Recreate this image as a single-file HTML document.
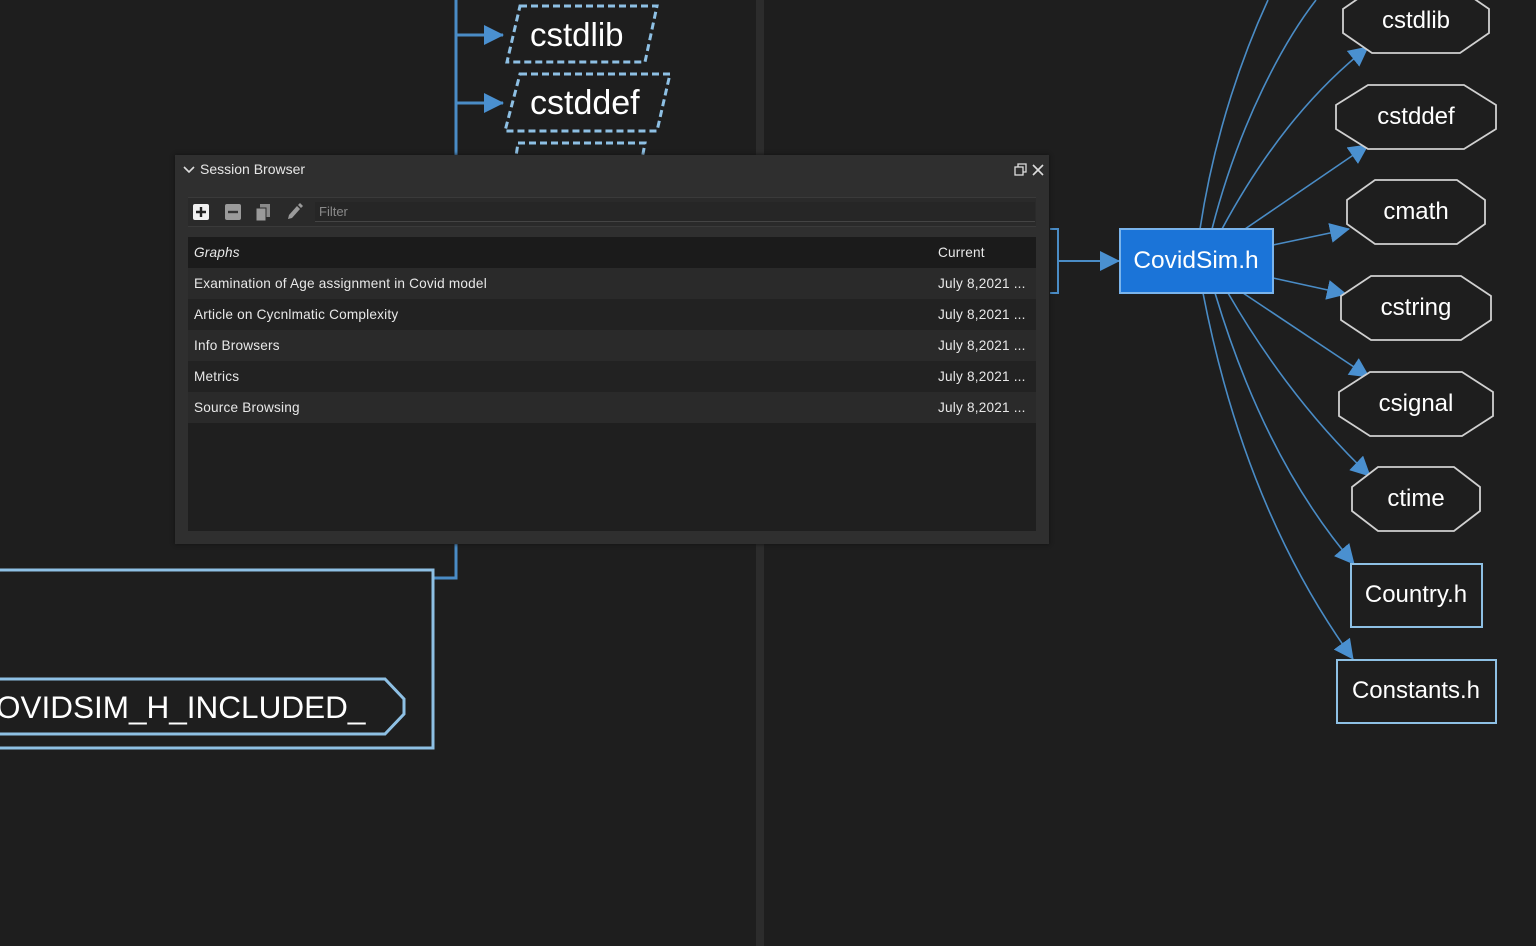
<!DOCTYPE html>
<html><head><meta charset="utf-8"><style>
html,body{margin:0;padding:0;background:#1e1e1e;width:1536px;height:946px;overflow:hidden;font-family:"Liberation Sans",sans-serif;}
svg{position:absolute;left:0;top:0;}
.panel{position:absolute;left:175px;top:155px;width:874px;height:389px;background:#2f2f2f;box-shadow:0 0 4px #111;}
.title{position:absolute;left:8px;top:6px;color:#e6e6e6;font-size:14px;}
.tb{position:absolute;left:13px;top:42px;width:848px;height:28px;background:#2a2a2a;border-top:1px solid #3a3a3a;border-bottom:1px solid #3a3a3a;}
.filter{position:absolute;left:127px;top:4px;width:720px;height:20px;background:#262626;border-bottom:1px solid #444;color:#8a8a8a;font-size:13px;line-height:20px;padding-left:4px;box-sizing:border-box;}
.table{position:absolute;left:13px;top:82px;width:848px;height:294px;background:#1f1f1f;}
.row{height:31px;line-height:32px;font-size:13.6px;letter-spacing:0.2px;color:#e8e8e8;position:relative;padding-left:6px;}
.row span{position:absolute;left:750px;}
.hd{background:#1b1b1b;}
.a{background:#2a2a2a;}
.b{background:#222;}
</style></head><body>
<svg width="1536" height="946" viewBox="0 0 1536 946">
<defs>
<marker id="ar2" markerWidth="20" markerHeight="20" refX="19" refY="10" orient="auto" markerUnits="userSpaceOnUse" viewBox="0 0 20 20"><path d="M0,0 L20,10 L0,20z" fill="#4a90d0"/></marker>
</defs>
<rect x="756" y="0" width="8" height="946" fill="#2c2c2c"/>
<g stroke="#4a8cc6" stroke-width="3" fill="none">
<path d="M456,0 L456,578 L433,578"/>
<path d="M456,35 L503,35" marker-end="url(#ar2)"/>
<path d="M456,103 L503,103" marker-end="url(#ar2)"/>
</g>
<g stroke="#8ec0e4" stroke-width="3" fill="none" stroke-dasharray="7,4">
<polygon points="520,6 657,6 645,62 507,62"/>
<polygon points="520,74 670,74 657,131 505,131"/>
<polygon points="518,143 645,143 640,170 514,170"/>
</g>
<g fill="#fff" font-family="Liberation Sans,sans-serif">
<text x="530" y="46" font-size="33">cstdlib</text>
<text x="530" y="114" font-size="34">cstddef</text>
</g>
<path d="M-10,570 L433,570 L433,748 L-10,748" stroke="#8ec0e4" stroke-width="3" fill="none"/>
<path d="M-10,679 L385,679 L404,699 L404,714 L385,734 L-10,734" stroke="#8ec0e4" stroke-width="3" fill="none"/>
<text x="-4" y="718" fill="#fff" font-size="31.5" font-family="Liberation Sans,sans-serif">OVIDSIM_H_INCLUDED_</text>
<path d="M1050,229 L1058,229 L1058,293 L1050,293" stroke="#4a8cc6" stroke-width="2" fill="none"/>
<path d="M1058,261 L1119,261" stroke="#4a8cc6" stroke-width="2" marker-end="url(#ar2)"/>
<g stroke="#4a8cc6" stroke-width="1.6" fill="none">
<path d="M1200,229 C1215,130 1245,50 1268,0"/>
<path d="M1212,229 C1240,120 1285,40 1316,0"/>
<path d="M1222,229 C1270,140 1320,85 1368,47" marker-end="url(#ar2)"/>
<path d="M1245,229 L1368,145" marker-end="url(#ar2)"/>
<path d="M1273,245 L1349,229" marker-end="url(#ar2)"/>
<path d="M1273,278 L1346,294" marker-end="url(#ar2)"/>
<path d="M1243,293 L1369,377" marker-end="url(#ar2)"/>
<path d="M1228,293 Q1290,400 1370,476" marker-end="url(#ar2)"/>
<path d="M1215,293 Q1265,460 1354,564" marker-end="url(#ar2)"/>
<path d="M1203,293 Q1245,510 1353,659" marker-end="url(#ar2)"/>
</g>
<rect x="1120" y="229" width="153" height="64" fill="#1b74d8" stroke="#7ab4ec" stroke-width="2"/>
<text x="1196" y="268" fill="#fff" font-size="24.5" text-anchor="middle" font-family="Liberation Sans,sans-serif">CovidSim.h</text>
<g stroke="#d0d0d0" stroke-width="1.8" fill="#1e1e1e">
<polygon points="1372,-11 1460,-11 1489,9 1489,33 1460,53 1372,53 1343,33 1343,9"/>
<polygon points="1368,85 1464,85 1496,105 1496,129 1464,149 1368,149 1336,129 1336,105"/>
<polygon points="1375,180 1457,180 1485,200 1485,224 1457,244 1375,244 1347,224 1347,200"/>
<polygon points="1371,276 1461,276 1491,296 1491,320 1461,340 1371,340 1341,320 1341,296"/>
<polygon points="1370,372 1462,372 1493,392 1493,416 1462,436 1370,436 1339,416 1339,392"/>
<polygon points="1378,467 1454,467 1480,487 1480,511 1454,531 1378,531 1352,511 1352,487"/>
</g>
<g stroke="#8ec0e4" stroke-width="2" fill="#1e1e1e">
<rect x="1351" y="564" width="131" height="63"/>
<rect x="1337" y="660" width="159" height="63"/>
</g>
<g fill="#fff" font-size="24" text-anchor="middle" font-family="Liberation Sans,sans-serif">
<text x="1416" y="28">cstdlib</text>
<text x="1416" y="124">cstddef</text>
<text x="1416" y="219">cmath</text>
<text x="1416" y="315">cstring</text>
<text x="1416" y="411">csignal</text>
<text x="1416" y="506">ctime</text>
<text x="1416" y="602">Country.h</text>
<text x="1416" y="698">Constants.h</text>
</g>
</svg>
<div class="panel">
<svg width="16" height="16" style="left:6px;top:7px" viewBox="0 0 16 16"><path d="M3,5 L8,10 L13,5" stroke="#ddd" stroke-width="1.6" fill="none"/></svg>
<div class="title" style="left:25px">Session Browser</div>
<svg width="40" height="16" style="left:837px;top:7px" viewBox="0 0 40 16"><rect x="3" y="5" width="8" height="8" stroke="#ddd" fill="none" stroke-width="1.3"/><path d="M6,5 V2 H14 V10 H11" stroke="#ddd" fill="none" stroke-width="1.3"/><path d="M21,3 L31,13 M31,3 L21,13" stroke="#ddd" stroke-width="1.6"/></svg>
<div class="tb">
<svg width="120" height="28" style="left:4px;top:0" viewBox="0 0 120 28">
<rect x="1" y="6" width="16" height="16" rx="2" fill="#f0f0f0"/><path d="M9,9 V19 M4,14 H14" stroke="#222" stroke-width="2.4"/>
<rect x="33" y="6" width="16" height="16" rx="2" fill="#9a9a9a"/><path d="M36,14 H46" stroke="#333" stroke-width="2.4"/>
<rect x="68" y="6" width="10" height="13" fill="#8a8a8a"/><rect x="64" y="10" width="10" height="13" fill="#9a9a9a" stroke="#2a2a2a"/>
<path d="M96,21 L100,20 L108,11 L105,8 L97,17z" fill="#9a9a9a"/><path d="M106,7 L108,5 L111,8 L109,10z" fill="#9a9a9a"/>
</svg>
<div class="filter">Filter</div>
</div>
<div class="table">
<div class="row hd"><i>Graphs</i><span>Current</span></div>
<div class="row a">Examination of Age assignment in Covid model<span>July 8,2021 ...</span></div>
<div class="row b">Article on Cycnlmatic Complexity<span>July 8,2021 ...</span></div>
<div class="row a">Info Browsers<span>July 8,2021 ...</span></div>
<div class="row b">Metrics<span>July 8,2021 ...</span></div>
<div class="row a">Source Browsing<span>July 8,2021 ...</span></div>
</div>
</div>
</body></html>
